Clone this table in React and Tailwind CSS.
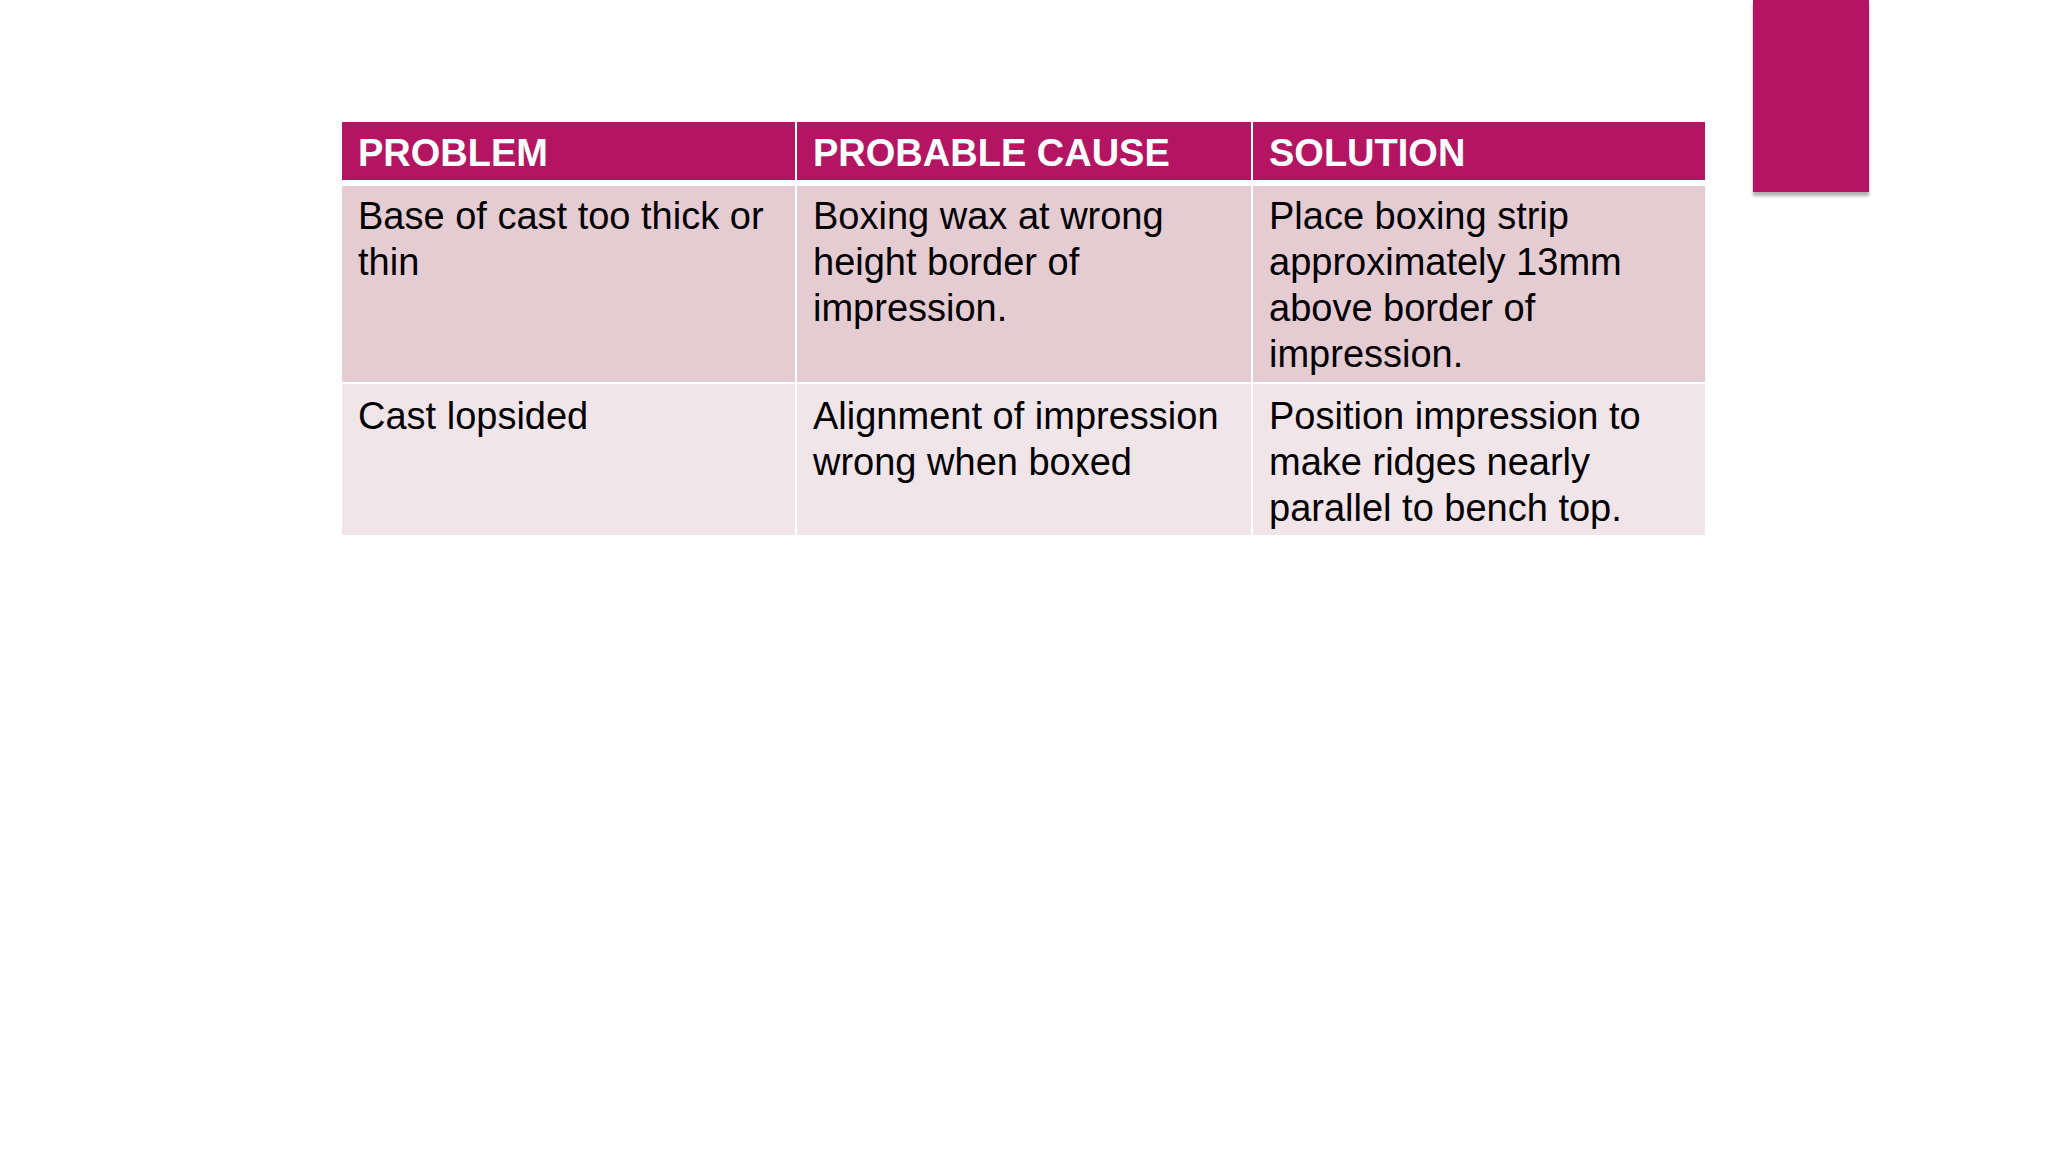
import React from "react";

const rows = [
  {
    bg: "bg-[#e5cbd2]",
    h: "h-[196px]",
    pt: "pt-[7px]",
    cells: ["Base of cast too thick or thin", "Boxing wax at wrong height border of impression.", "Place boxing strip approximately 13mm above border of impression."],
  },
  {
    bg: "bg-[#f2e5e9]",
    h: "h-[151px]",
    pt: "pt-[9px]",
    cells: ["Cast lopsided", "Alignment of impression wrong when boxed", "Position impression to make ridges nearly parallel to bench top."],
  },
];

const App = () => {
  return (
    <div className="relative w-[2048px] h-[1152px] bg-white overflow-hidden" style={{ fontFamily: '"Liberation Sans", Arial, sans-serif' }}>
      {/* slide accent */}
      <div className="absolute left-[1753px] top-0 w-[116px] h-[192px] bg-[#b31563] shadow-[0_4px_3px_rgba(0,0,0,0.3)]" />

      <div className="pt-[122px] pl-[342px]">
        <div className="flex flex-col w-[1363px]">
          <div className="grid grid-cols-[453px_454px_452px] gap-x-[2px] h-[58px]">
            {["PROBLEM", "PROBABLE CAUSE", "SOLUTION"].map((t) => (
              <div key={t} className="bg-[#b31563] text-white font-bold text-[38px] leading-[46px] pt-[8px] px-[16px]">
                {t}
              </div>
            ))}
          </div>
          <div className="flex flex-col gap-y-[2px] mt-[6px]">
            {rows.map((r, i) => (
              <div key={i} className={`grid grid-cols-[453px_454px_452px] gap-x-[2px] ${r.h}`}>
                {r.cells.map((c, j) => (
                  <div key={j} className={`${r.bg} ${r.pt} text-black text-[38px] leading-[46px] pl-[16px] pr-[14px]`}>
                    {c}
                  </div>
                ))}
              </div>
            ))}
          </div>
        </div>
      </div>
    </div>
  );
};

export default App;
